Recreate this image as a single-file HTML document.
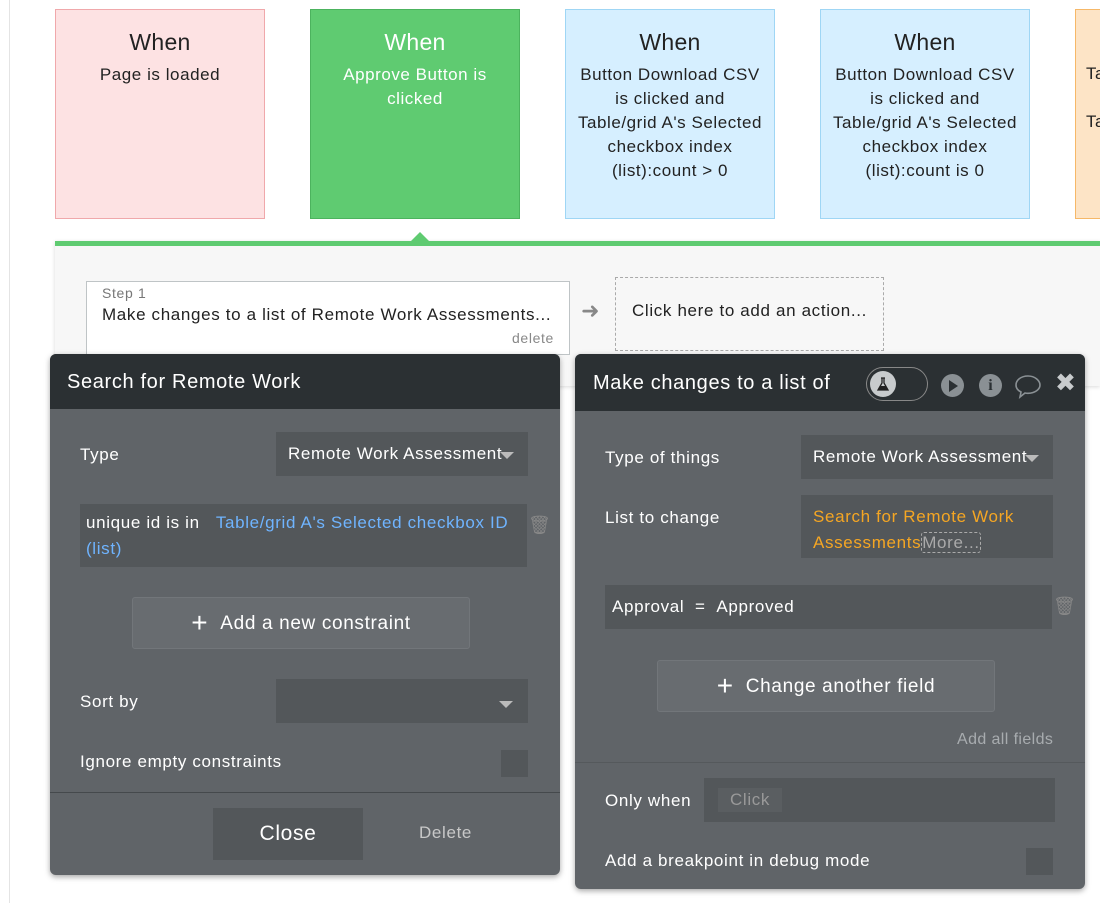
<!DOCTYPE html>
<html><head><meta charset="utf-8"><style>
*{box-sizing:border-box;margin:0;padding:0}
body{width:1100px;height:903px;background:#fff;font-family:"Liberation Sans","DejaVu Sans",sans-serif;position:relative;overflow:hidden;color:#222;letter-spacing:0.65px}
.a{position:absolute}
.card{position:absolute;top:9px;width:210px;height:210px;border:1px solid;text-align:center;font-size:17px;line-height:24px;padding-top:18px;letter-spacing:0.55px}
.card h3{font-weight:normal;font-size:23px;line-height:28px;margin-bottom:7px;letter-spacing:0.3px}
.panel{position:absolute;background:#606468;border-radius:6px;box-shadow:0 2px 6px rgba(0,0,0,.35);color:#fff}
.hd{height:55px;background:#2b3033;border-radius:6px 6px 0 0;font-size:20px;padding:17px 17px;white-space:nowrap;overflow:hidden}
.lbl{position:absolute;font-size:17px;color:#fff}
.fld{position:absolute;background:#53575a;font-size:17px;color:#fff;padding:0 12px;line-height:44px;height:44px;white-space:nowrap;overflow:hidden}
.btn{position:absolute;background:#686c70;border:1px solid #72767a;border-radius:3px;font-size:19px;text-align:center;line-height:50px;color:#fff}
.tri{position:absolute;width:0;height:0;border-left:7px solid transparent;border-right:7px solid transparent;border-top:7px solid #bbb}
</style></head><body>
<div class="a" style="left:9px;top:0;width:1px;height:903px;background:#e4e4e4"></div>

<div class="card" style="left:55px;background:#fde2e3;border-color:#f0a8ab"><h3>When</h3>Page is loaded</div>
<div class="card" style="left:310px;background:#5fcb71;border-color:#4cb35e;color:#fff"><h3>When</h3>Approve Button is<br>clicked</div>
<div class="card" style="left:565px;background:#d6efff;border-color:#9fd6f5"><h3>When</h3>Button Download CSV<br>is clicked and<br>Table/grid A's Selected<br>checkbox index<br>(list):count &gt; 0</div>
<div class="card" style="left:820px;background:#d6efff;border-color:#9fd6f5"><h3>When</h3>Button Download CSV<br>is clicked and<br>Table/grid A's Selected<br>checkbox index<br>(list):count is 0</div>
<div class="card" style="left:1075px;width:40px;background:#fde4c6;border-color:#f6b868;text-align:left;padding-left:10px;padding-top:52px">Ta<br><br>Ta</div>

<div class="a" style="left:55px;top:241px;width:1045px;height:145px;background:#f7f7f7;box-shadow:0 1px 4px rgba(0,0,0,.15)"></div>
<div class="a" style="left:55px;top:241px;width:1045px;height:5px;background:#5fcb71"></div>
<div class="a" style="left:411px;top:232px;width:0;height:0;border-left:9px solid transparent;border-right:9px solid transparent;border-bottom:9px solid #5fcb71"></div>

<div class="a" style="left:86px;top:281px;width:484px;height:74px;background:#fff;border:1px solid #bfc4c6">
 <div class="a" style="left:15px;top:3px;font-size:14px;color:#777">Step 1</div>
 <div class="a" style="left:15px;top:23px;font-size:17px;color:#222;white-space:nowrap">Make changes to a list of Remote Work Assessments...</div>
 <div class="a" style="right:15px;top:48px;font-size:14px;color:#888">delete</div>
</div>
<div class="a" style="left:581px;top:298px;font-size:22px;color:#888;font-weight:bold">&#10140;</div>
<div class="a" style="left:615px;top:277px;width:269px;height:74px;border:1px dashed #aaa;font-size:17px;padding:23px 16px;white-space:nowrap">Click here to add an action...</div>

<!-- left panel -->
<div class="panel" style="left:50px;top:354px;width:510px;height:521px">
 <div class="hd">Search for Remote Work</div>
 <div class="lbl" style="left:30px;top:91px">Type</div>
 <div class="fld" style="left:226px;top:78px;width:252px">Remote Work Assessment</div>
 <div class="tri" style="left:450px;top:98px"></div>
 <div class="fld" style="left:30px;top:150px;width:447px;height:63px;line-height:26px;padding:6px 6px;white-space:normal">unique id is in &nbsp;&nbsp;<span style="color:#6fb4ff">Table/grid A's Selected checkbox ID (list)</span></div>
 <div class="a" style="left:478px;top:161px;color:#888;font-size:18px">&#128465;</div>
 <div class="btn" style="left:82px;top:243px;width:338px;height:52px"><span style="font-size:28px;vertical-align:-3px;margin-right:12px">+</span>Add a new constraint</div>
 <div class="lbl" style="left:30px;top:338px">Sort by</div>
 <div class="fld" style="left:226px;top:325px;width:252px"></div>
 <div class="tri" style="left:449px;top:347px"></div>
 <div class="lbl" style="left:30px;top:398px">Ignore empty constraints</div>
 <div class="a" style="left:451px;top:396px;width:27px;height:27px;background:#53575a"></div>
 <div class="a" style="left:0;top:438px;width:510px;height:1px;background:#45494c"></div>
 <div class="a" style="left:163px;top:454px;width:150px;height:52px;background:#53575a;text-align:center;line-height:52px;font-size:21px">Close</div>
 <div class="a" style="left:369px;top:469px;font-size:17px;color:#c8c8c8">Delete</div>
</div>

<!-- right panel -->
<div class="panel" style="left:575px;top:354px;width:510px;height:535px">
 <div class="hd" style="height:57px;padding:18px 18px;width:256px;border-radius:6px 0 0 0">Make changes to a list of</div>
 <div class="a" style="left:255px;top:0;width:255px;height:57px;background:#2b3033;border-radius:0 6px 0 0"></div>
 <div class="a" style="left:291px;top:13px;width:62px;height:34px;border:1px solid #888;border-radius:17px;background:#2b3033"></div>
 <div class="a" style="left:295px;top:17px;width:26px;height:26px;border-radius:50%;background:#c8cbcd"></div>
 <svg class="a" style="left:299px;top:21px" width="18" height="18" viewBox="0 0 18 18"><path d="M7 3h4M8 3v5l-4 7h10l-4-7V3" fill="none" stroke="#222" stroke-width="1.3"/><path d="M6 11h6l2 4H4z" fill="#222"/></svg>
 <div class="a" style="left:366px;top:20px;width:23px;height:23px;border-radius:50%;background:#8a9094"><div class="a" style="left:8px;top:6px;border-left:9px solid #2b3033;border-top:6px solid transparent;border-bottom:6px solid transparent"></div></div>
 <div class="a" style="left:404px;top:20px;width:23px;height:23px;border-radius:50%;background:#8a9094;color:#2b3033;font-weight:bold;text-align:center;line-height:23px;font-size:16px;font-family:'Liberation Serif',serif;letter-spacing:0">i</div>
 <svg class="a" style="left:439px;top:20px" width="28" height="26" viewBox="0 0 28 26"><path d="M14 2C7 2 2 6 2 11c0 3 2 5.5 5 7l-1 5 5-4c1 .2 2 .3 3 .3 7 0 12-4 12-8.3S21 2 14 2z" fill="none" stroke="#8a9094" stroke-width="1.6"/></svg>
 <div class="a" style="left:480px;top:14px;color:#c8cbcd;font-size:25px;font-weight:bold">&#10006;</div>
 <div class="lbl" style="left:30px;top:94px">Type of things</div>
 <div class="fld" style="left:226px;top:81px;width:252px">Remote Work Assessment</div>
 <div class="tri" style="left:450px;top:101px"></div>
 <div class="lbl" style="left:30px;top:154px">List to change</div>
 <div class="fld" style="left:226px;top:141px;width:252px;height:63px;line-height:26px;padding:9px 12px;white-space:normal;color:#f5a623">Search for Remote Work Assessments<span style="color:#aaa;border:1px dashed #aaa;border-radius:3px">More...</span></div>
 <div class="fld" style="left:30px;top:231px;width:447px;padding:0 7px">Approval &nbsp;= &nbsp;Approved</div>
 <div class="a" style="left:478px;top:242px;color:#888;font-size:18px">&#128465;</div>
 <div class="btn" style="left:82px;top:306px;width:338px;height:52px"><span style="font-size:28px;vertical-align:-3px;margin-right:12px">+</span>Change another field</div>
 <div class="a" style="left:382px;top:377px;font-size:16px;color:#a8acaf;letter-spacing:0.4px">Add all fields</div>
 <div class="a" style="left:0;top:408px;width:510px;height:1px;background:#55595c"></div>
 <div class="lbl" style="left:30px;top:437px">Only when</div>
 <div class="fld" style="left:129px;top:424px;width:351px;padding:0 14px"><span style="background:#5a5e61;color:#999;padding:2px 12px;line-height:20px;display:inline-block">Click</span></div>
 <div class="lbl" style="left:30px;top:497px">Add a breakpoint in debug mode</div>
 <div class="a" style="left:451px;top:494px;width:27px;height:27px;background:#53575a"></div>
</div>
</body></html>
